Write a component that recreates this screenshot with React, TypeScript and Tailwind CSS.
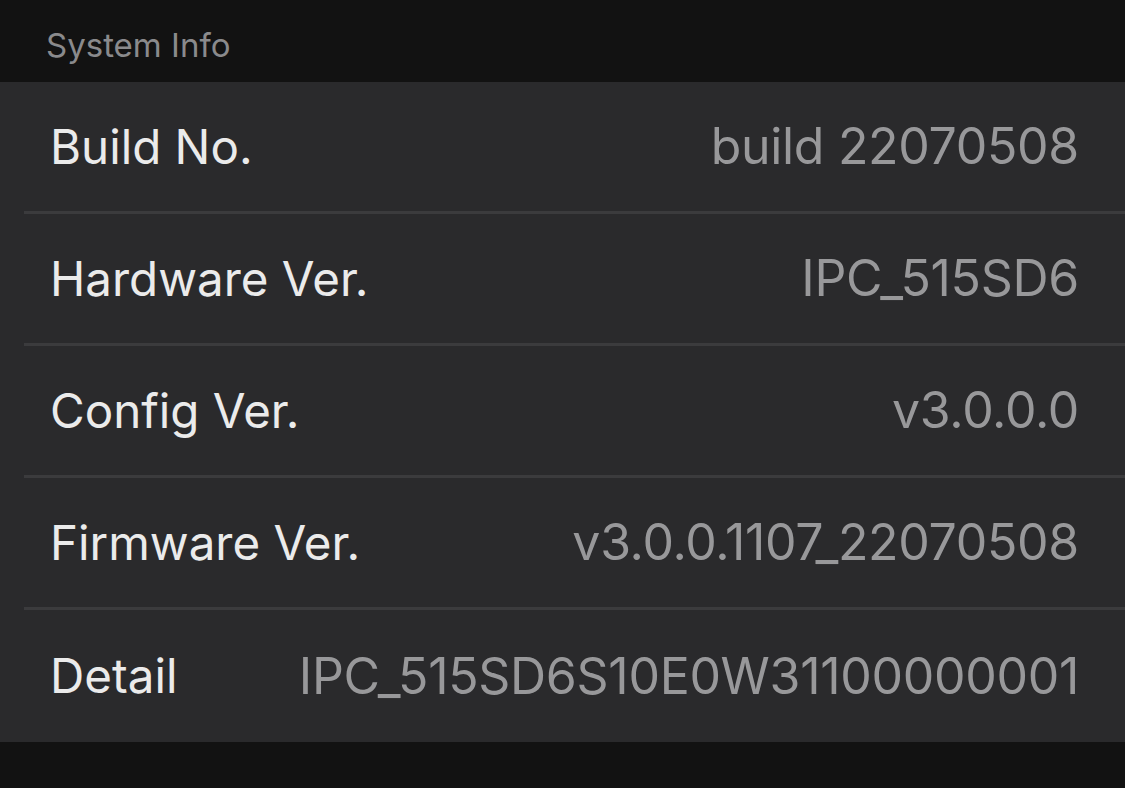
const rows: { label: string; value: string }[] = [
  { label: "Build No.", value: "build 22070508" },
  { label: "Hardware Ver.", value: "IPC_515SD6" },
  { label: "Config Ver.", value: "v3.0.0.0" },
  { label: "Firmware Ver.", value: "v3.0.0.1107_22070508" },
  { label: "Detail", value: "IPC_515SD6S10E0W31100000001" },
];

export default function App() {
  return (
    <div
      className="w-[1125px] h-[788px] bg-[#121212] flex flex-col"
      style={{ fontFamily: "Inter, 'Noto Sans', sans-serif" }}
    >
      {/* Section header */}
      <div className="h-[82px] pl-[46px] pt-[25px] text-[33px] leading-[40px] text-[#8a8a8c]">
        System Info
      </div>

      {/* Info list */}
      <div className="bg-[#2a2a2c]">
        {rows.map((row, i) => (
          <div key={row.label} className="pl-[24px]">
            <div
              className={
                "h-[132px] flex items-center justify-between pr-[46px] pl-[26px] " +
                (i < rows.length - 1 ? "border-b-[3px] border-[#3b3b3d]" : "")
              }
            >
              <span className="text-[47.5px] text-[#ebebeb] whitespace-nowrap">{row.label}</span>
              <span className="text-[50px] text-[#98989a] whitespace-nowrap tracking-[-0.3px]">
                {row.value}
              </span>
            </div>
          </div>
        ))}
      </div>
    </div>
  );
}
